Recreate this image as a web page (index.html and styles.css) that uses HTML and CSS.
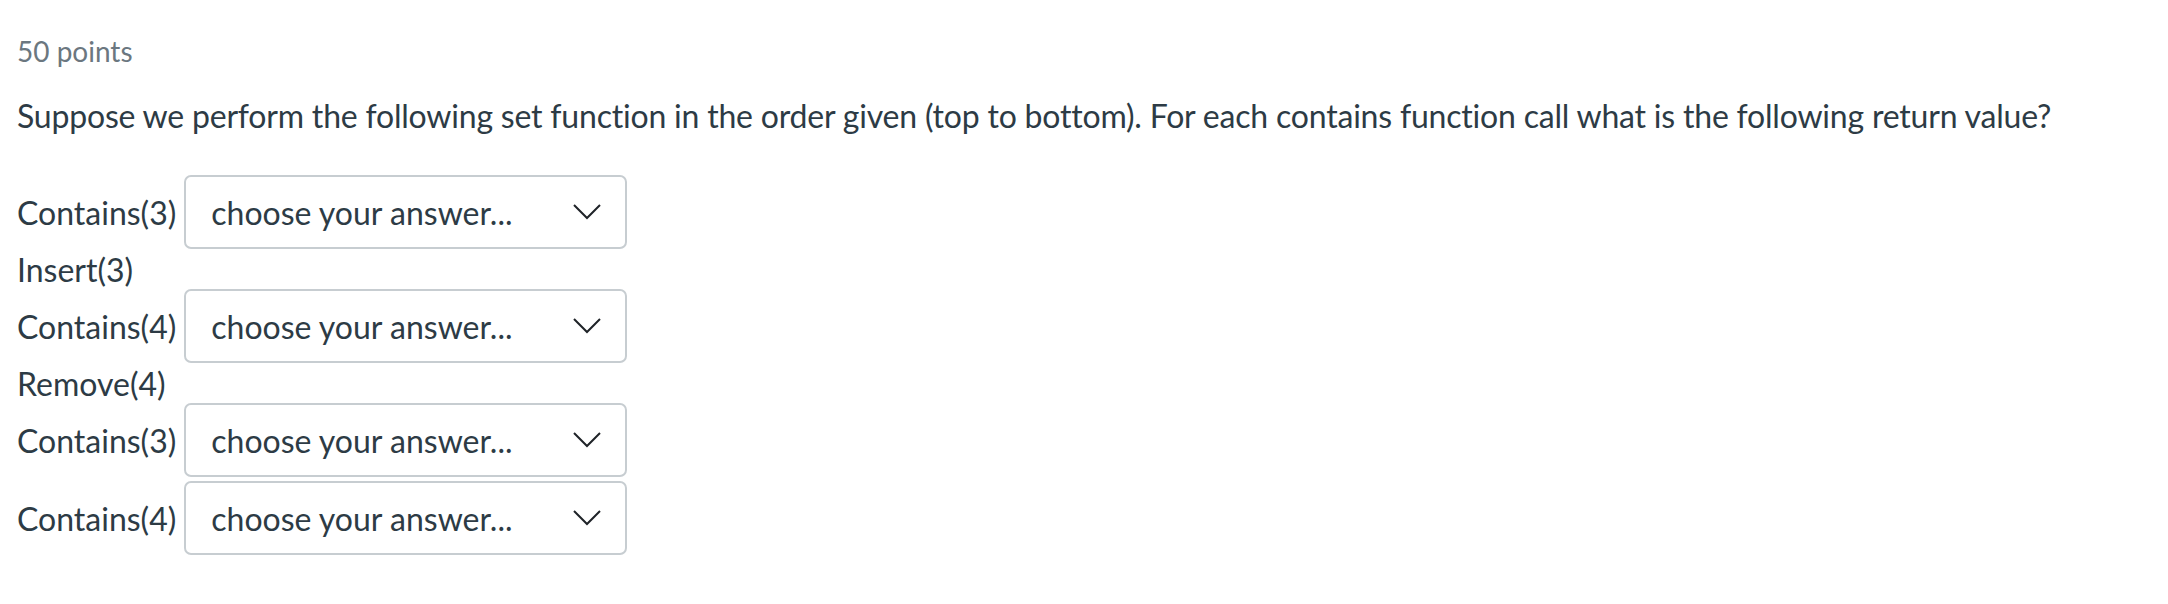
FILE: index.html
```html
<!DOCTYPE html>
<html>
<head>
<meta charset="utf-8">
<link rel="stylesheet" href="styles.css">
</head>
<body>
<div class="quiz">
  <div class="points">50 points</div>
  <div class="question">Suppose we perform the following set function in the order given (top to bottom). For each contains function call what is the following return value?</div>
  <div class="ops">
    <div class="row row-select">
      <span class="label">Contains(3)</span>
      <div class="select"><span class="sel-text">choose your answer...</span><svg class="chev" viewBox="0 0 28 16"><path d="M1 1 L14 14 L27 1" fill="none" stroke="#1f2328" stroke-width="2"/></svg></div>
    </div>
    <div class="row row-text"><span class="label">Insert(3)</span></div>
    <div class="row row-select">
      <span class="label">Contains(4)</span>
      <div class="select"><span class="sel-text">choose your answer...</span><svg class="chev" viewBox="0 0 28 16"><path d="M1 1 L14 14 L27 1" fill="none" stroke="#1f2328" stroke-width="2"/></svg></div>
    </div>
    <div class="row row-text"><span class="label">Remove(4)</span></div>
    <div class="row row-select">
      <span class="label">Contains(3)</span>
      <div class="select"><span class="sel-text">choose your answer...</span><svg class="chev" viewBox="0 0 28 16"><path d="M1 1 L14 14 L27 1" fill="none" stroke="#1f2328" stroke-width="2"/></svg></div>
    </div>
    <div class="row row-select row-gap">
      <span class="label">Contains(4)</span>
      <div class="select"><span class="sel-text">choose your answer...</span><svg class="chev" viewBox="0 0 28 16"><path d="M1 1 L14 14 L27 1" fill="none" stroke="#1f2328" stroke-width="2"/></svg></div>
    </div>
  </div>
</div>
</body>
</html>
```
FILE: styles.css
```css
html, body {
  margin: 0;
  padding: 0;
  background: #ffffff;
}
body {
  font-family: Lato, "Noto Sans", sans-serif;
  color: #2d3b45;
}
.quiz {
  padding: 0 0 0 17px;
}
.points {
  padding-top: 33px;
  font-size: 28px;
  line-height: 36px;
  color: #6b7780;
}
.question {
  margin-top: 27px;
  font-size: 32px;
  line-height: 40px;
  letter-spacing: -0.2px;
  white-space: nowrap;
}
.ops {
  margin-top: 39px;
  display: flex;
  flex-direction: column;
}
.row {
  display: flex;
  align-items: center;
  font-size: 32px;
}
.row-text {
  height: 40px;
}
.row-gap {
  margin-top: 4px;
}
.label {
  margin-right: 8px;
}
.select {
  box-sizing: border-box;
  width: 443px;
  height: 74px;
  border: 2px solid #c7cdd1;
  border-radius: 7px;
  display: flex;
  align-items: center;
  justify-content: space-between;
  padding: 0 24px 0 25px;
  color: #2d3b45;
}
.chev {
  width: 28px;
  height: 16px;
}
```
